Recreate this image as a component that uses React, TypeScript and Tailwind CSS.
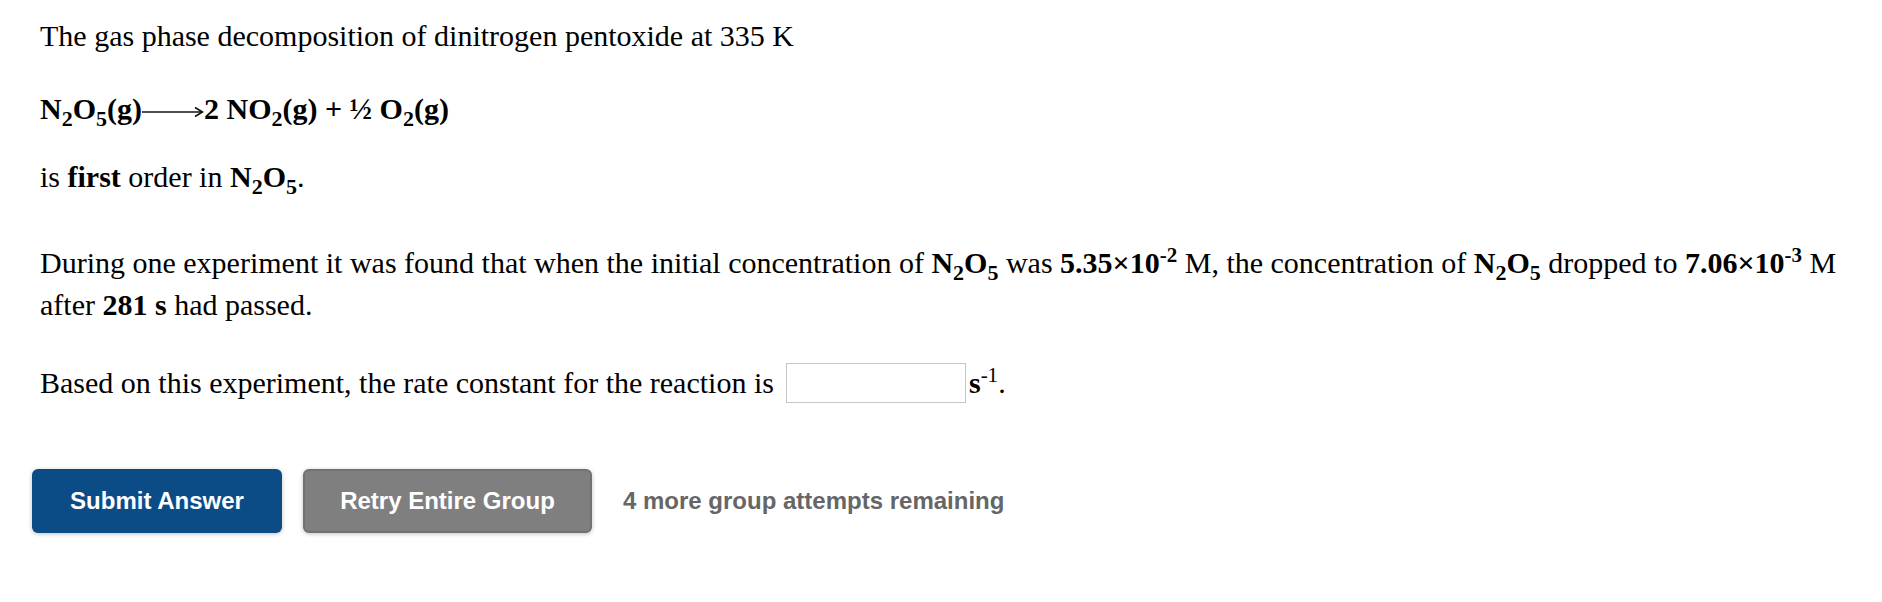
import React from "react";

const Sub = ({ children }: { children: React.ReactNode }) => (
  <span className="relative top-[7px] align-baseline text-[22px] font-bold leading-none">{children}</span>
);

const Sup = ({ children, bold }: { children: React.ReactNode; bold?: boolean }) => (
  <span
    className={`relative -top-[11px] align-baseline text-[21px] leading-none ${bold ? "font-bold" : "font-normal"}`}
  >
    {children}
  </span>
);

const N2O5 = () => (
  <b>
    N<Sub>2</Sub>O<Sub>5</Sub>
  </b>
);

const Arrow = () => (
  <svg width="62" height="14" viewBox="0 0 62 14" className="inline-block align-middle">
    <line x1="0" y1="7" x2="59" y2="7" stroke="#111" strokeWidth="1.6" />
    <path d="M53 2.5 L60.5 7 L53 11.5" fill="none" stroke="#111" strokeWidth="1.6" />
  </svg>
);

const App = () => {
  return (
    <div className="min-h-[602px] w-[1882px] bg-white pl-[40px] pt-[16px] text-black [font-family:'Liberation_Serif','Times_New_Roman',serif]">
      <p className="text-[30px] leading-[40px]">The gas phase decomposition of dinitrogen pentoxide at 335 K</p>

      <p className="mt-[33px] text-[30px] font-bold leading-[40px]">
        N<Sub>2</Sub>O<Sub>5</Sub>(g)
        <Arrow />2 NO<Sub>2</Sub>(g) + ½ O<Sub>2</Sub>(g)
      </p>

      <p className="mt-[28px] text-[30px] leading-[40px]">
        is <b>first</b> order in <N2O5 />.
      </p>

      <p className="mt-[45px] text-[30px] leading-[42px]">
        During one experiment it was found that when the initial concentration of <N2O5 /> was{" "}
        <b>
          5.35×10<Sup bold>-2</Sup>
        </b>{" "}
        M, the concentration of <N2O5 /> dropped to{" "}
        <b>
          7.06×10<Sup bold>-3</Sup>
        </b>{" "}
        M
        <br />
        after <b>281 s</b> had passed.
      </p>

      <div className="mt-[37px] flex items-center text-[30px] leading-[40px]">
        <span>Based on this experiment, the rate constant for the reaction is</span>
        <input
          type="text"
          className="ml-[12px] h-[40px] w-[180px] border border-[#c6c6c6] bg-white outline-none"
        />
        <span className="ml-[3px]">
          <b>s</b>
          <Sup>-1</Sup>.
        </span>
      </div>

      <div className="-ml-[8px] mt-[66px] flex items-center [font-family:'Liberation_Sans',Arial,sans-serif]">
        <button className="h-[64px] w-[250px] rounded-[6px] bg-[#0b4c86] text-[24px] font-bold text-white shadow-[0_1px_4px_rgba(0,0,0,0.25)]">
          Submit Answer
        </button>
        <button className="ml-[21px] h-[64px] w-[289px] rounded-[6px] border-2 border-[#717171] bg-[#7f7f7f] text-[24px] font-bold text-white shadow-[0_1px_4px_rgba(0,0,0,0.25)]">
          Retry Entire Group
        </button>
        <span className="ml-[31px] text-[24px] font-bold text-[#666666]">4 more group attempts remaining</span>
      </div>
    </div>
  );
};

export default App;
